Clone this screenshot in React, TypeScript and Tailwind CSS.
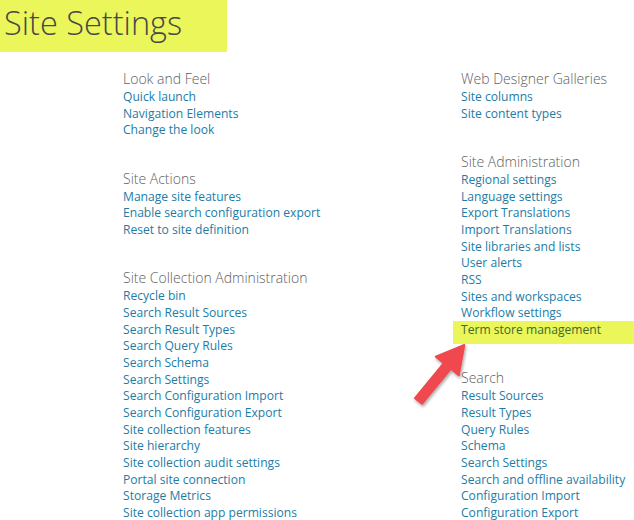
import React from "react";

type Group = { title: string; links: string[] };

const left: Group[] = [
  { title: "Look and Feel", links: ["Quick launch", "Navigation Elements", "Change the look"] },
  {
    title: "Site Actions",
    links: ["Manage site features", "Enable search configuration export", "Reset to site definition"],
  },
  {
    title: "Site Collection Administration",
    links: [
      "Recycle bin",
      "Search Result Sources",
      "Search Result Types",
      "Search Query Rules",
      "Search Schema",
      "Search Settings",
      "Search Configuration Import",
      "Search Configuration Export",
      "Site collection features",
      "Site hierarchy",
      "Site collection audit settings",
      "Portal site connection",
      "Storage Metrics",
      "Site collection app permissions",
    ],
  },
];

const right: Group[] = [
  { title: "Web Designer Galleries", links: ["Site columns", "Site content types"] },
  {
    title: "Site Administration",
    links: [
      "Regional settings",
      "Language settings",
      "Export Translations",
      "Import Translations",
      "Site libraries and lists",
      "User alerts",
      "RSS",
      "Sites and workspaces",
      "Workflow settings",
      "Term store management",
    ],
  },
  {
    title: "Search",
    links: [
      "Result Sources",
      "Result Types",
      "Query Rules",
      "Schema",
      "Search Settings",
      "Search and offline availability",
      "Configuration Import",
      "Configuration Export",
    ],
  },
];

function GroupBlock({ g, first }: { g: Group; first: boolean }) {
  return (
    <div className={first ? "" : "mt-[28.67px]"}>
      <div className="text-[14px] leading-[21px] font-light text-[#5e5e5e] whitespace-nowrap">{g.title}</div>
      {g.links.map((l) =>
        l === "Term store management" ? (
          <div
            key={l}
            className="-ml-[8px] pl-[8px] -mt-[1px] pt-[1px] -mb-[5px] pb-[5px] bg-[#eaf65a] text-[12.1px] leading-[16.67px] text-[#3f6a2c] whitespace-nowrap"
          >
            {l}
          </div>
        ) : (
          <div key={l} className="text-[12.1px] leading-[16.67px] text-[#1d7ca6] whitespace-nowrap">
            {l}
          </div>
        )
      )}
    </div>
  );
}

export default function App() {
  return (
    <div
      className="relative w-[634px] h-[520px] bg-white overflow-hidden"
      style={{ fontFamily: '"Open Sans", "Noto Sans", sans-serif' }}
    >
      <div className="w-[227px] h-[52px] bg-[#eaf65a] pl-[4px]">
        <div className="text-[32.5px] leading-[46px] font-light text-[#474747] whitespace-nowrap">Site Settings</div>
      </div>
      <div className="flex pt-[16px] pl-[123px]">
        <div className="w-[338px] shrink-0">
          {left.map((g, i) => (
            <GroupBlock key={g.title} g={g} first={i === 0} />
          ))}
        </div>
        <div className="flex-1">
          {right.map((g, i) => (
            <GroupBlock key={g.title} g={g} first={i === 0} />
          ))}
        </div>
      </div>
      <svg
        className="absolute left-0 top-0 pointer-events-none"
        width="634"
        height="520"
        viewBox="0 0 634 520"
      >
        <defs>
          <filter id="sh" x="-50%" y="-50%" width="200%" height="200%">
            <feDropShadow dx="1" dy="2" stdDeviation="1.5" floodColor="#000" floodOpacity="0.35" />
          </filter>
        </defs>
        <polygon
          points="422,403.8 450.8,368.8 458.8,375.3 464.3,345 435.8,356.7 443.8,363.2 415,398.2"
          fill="#ef4a4f"
          stroke="#ef4a4f"
          strokeWidth="2"
          strokeLinejoin="round"
          filter="url(#sh)"
        />
      </svg>
    </div>
  );
}
